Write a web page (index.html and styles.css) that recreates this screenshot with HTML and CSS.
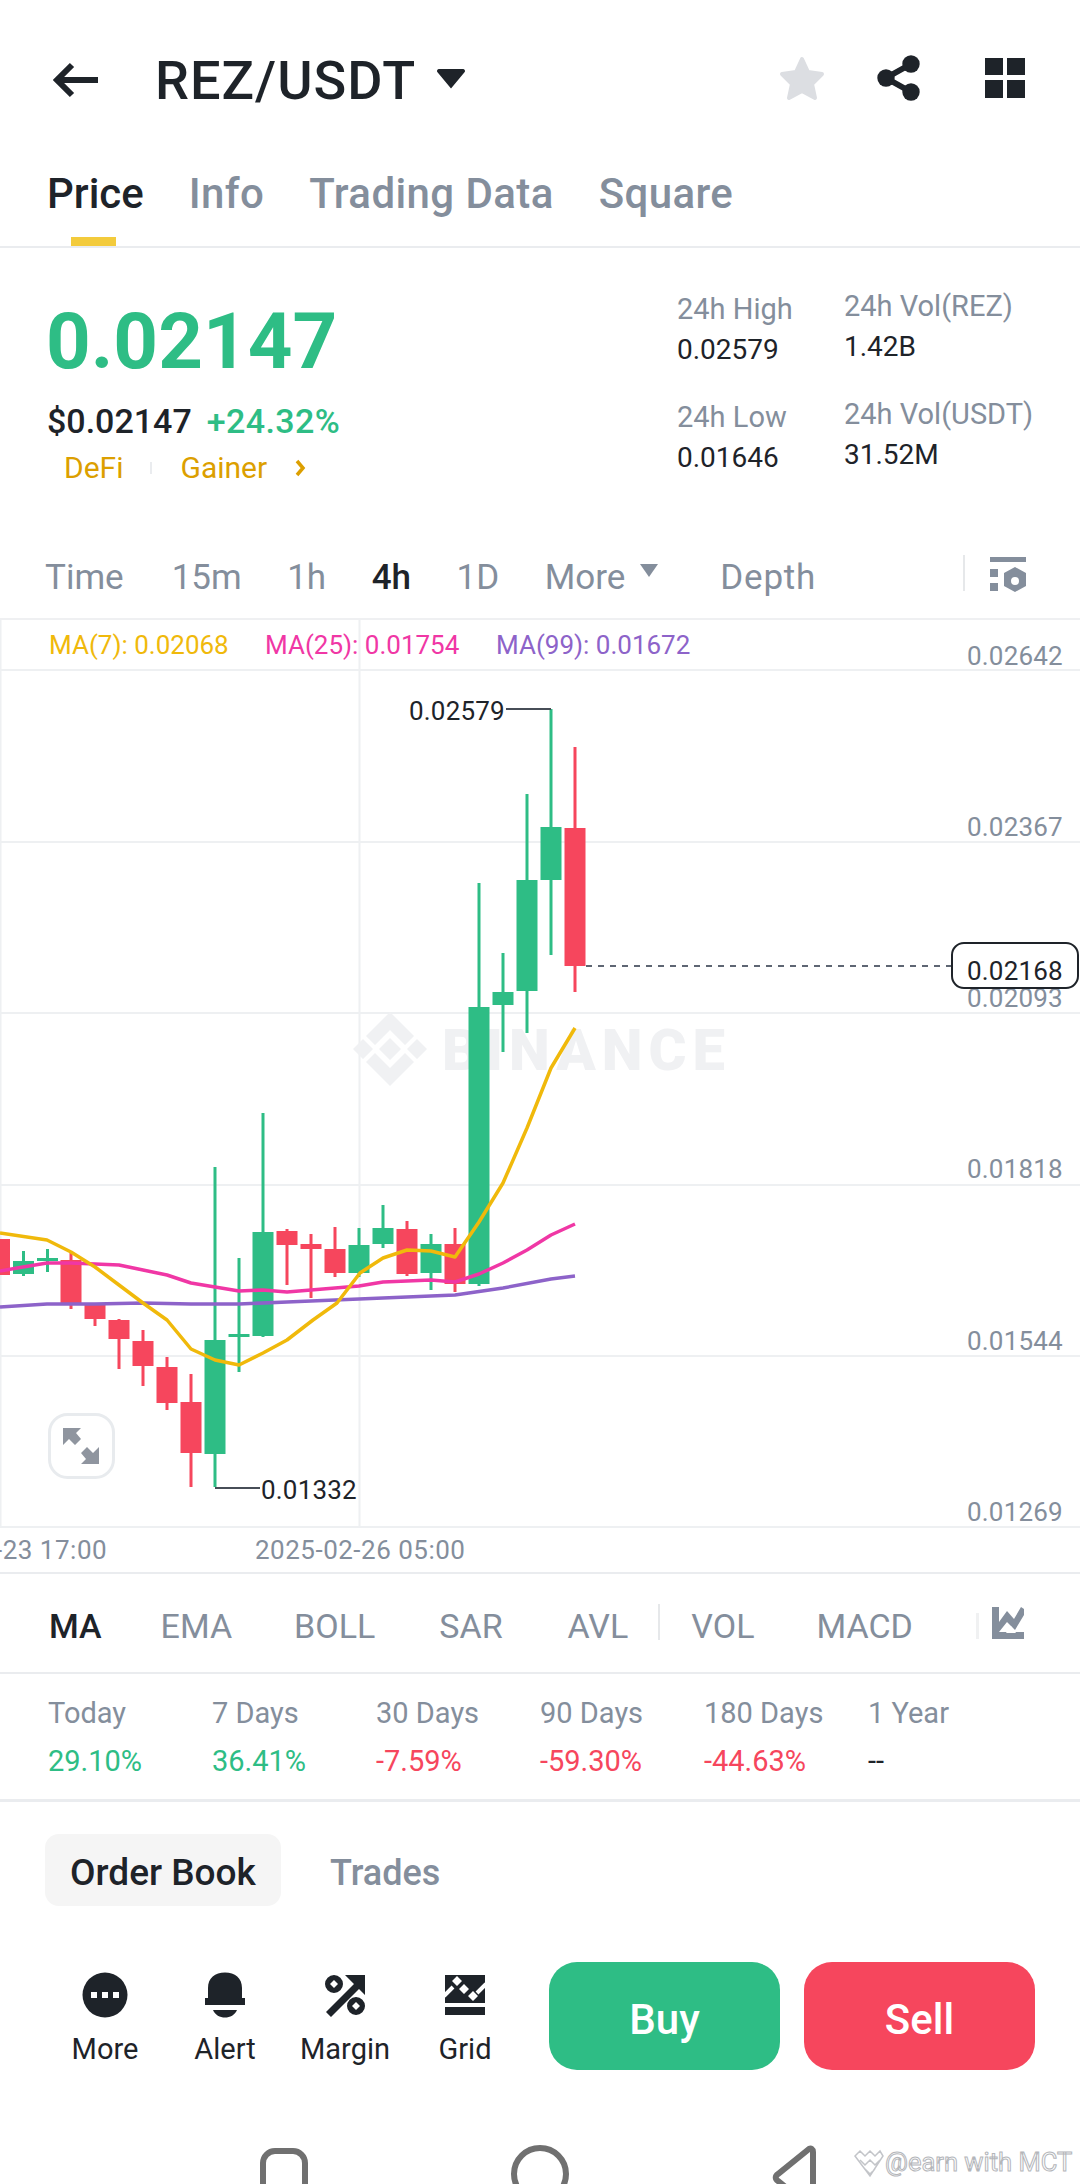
FILE: index.html
```html
<!DOCTYPE html>
<html lang="en">
<head>
<meta charset="utf-8">
<title>REZ/USDT</title>
<link rel="stylesheet" href="styles.css">
</head>
<body>
<div class="page">
  <header class="header">
    <svg class="back" viewBox="0 0 46 38" width="46" height="38"><path d="M46 19H6M20 4 5 19l15 15" fill="none" stroke="#1e2329" stroke-width="6"/></svg>
    <h1 class="title">REZ/USDT</h1>
    <svg class="caret" viewBox="0 0 28 21" width="28" height="21"><path d="M2 1h24a2 2 0 0 1 1.500 3.300L14 20.500.5 4.300A2 2 0 0 1 2 1z" fill="#1e2329"/></svg>
    <svg class="star" viewBox="0 0 46 46" width="46" height="46"><path d="m23 4 6 13 14 2-10 10 3 14-13-7-13 7 3-14L3 19l14-2z" fill="#dcdee2" stroke="#dcdee2" stroke-width="4" stroke-linejoin="round"/></svg>
    <svg class="share" viewBox="0 0 44 46" width="44" height="46"><path d="M34 9 9 23l25 14" fill="none" stroke="#1e2329" stroke-width="6"/><circle cx="34" cy="9" r="8.700" fill="#1e2329"/><circle cx="9" cy="23" r="8.700" fill="#1e2329"/><circle cx="34" cy="37" r="8.700" fill="#1e2329"/></svg>
    <svg class="apps" viewBox="0 0 40 40" width="40" height="40"><path d="M0 0h18v17H0zM22 0h18v17H22zM0 22h18v18H0zM22 22h18v18H22z" fill="#1e2329"/></svg>
  </header>

  <nav class="tabs">
    <span class="tab tab-on">Price</span>
    <span class="tab">Info</span>
    <span class="tab">Trading Data</span>
    <span class="tab">Square</span>
  </nav>

  <section class="summary">
    <div class="quote">
      <div class="last">0.02147</div>
      <div class="sub"><span class="usd">$0.02147</span><span class="chg">+24.32%</span></div>
      <div class="tags"><span>DeFi</span><i class="tag-sep"></i><span>Gainer</span><svg class="chev" viewBox="0 0 12 18" width="12" height="18"><path d="m3 2 6 7-6 7" fill="none" stroke="#dc9f00" stroke-width="3.500"/></svg></div>
    </div>
    <div class="stats">
      <div class="stat-col">
        <div class="stat-k">24h High</div><div class="stat-v">0.02579</div>
        <div class="stat-k stat-gap">24h Low</div><div class="stat-v">0.01646</div>
      </div>
      <div class="stat-col stat-col-b">
        <div class="stat-k">24h Vol(REZ)</div><div class="stat-v">1.42B</div>
        <div class="stat-k stat-gap">24h Vol(USDT)</div><div class="stat-v">31.52M</div>
      </div>
    </div>
  </section>

  <section class="ranges">
    <span class="r-first">Time</span><span>15m</span><span>1h</span><span class="on">4h</span><span>1D</span>
    <span class="more">More<svg viewBox="0 0 18 13" width="18" height="13"><path d="M0 0h18L9 13z" fill="#848e9c"/></svg></span>
    <span class="depth">Depth</span>
    <i class="range-sep"></i>
    <svg class="cfg" viewBox="0 0 36 36" width="36" height="36"><path d="M0 0h36v5H0zM0 12h8v8H0zM0 26h8v8H0z" fill="#848e9c"/><path fill-rule="evenodd" d="m25 10 11 6v13l-11 6-11-6V16zm0 10a4 4 0 1 0 0 8 4 4 0 0 0 0-8z" fill="#848e9c"/></svg>
  </section>

  <section class="chart">
    <svg class="plot" viewBox="0 620 1080 952" width="1080" height="952">
      <path class="grid" d="M0 670H1080M0 842H1080M0 1013H1080M0 1185H1080M0 1356H1080M0 1527H1080M359.500 620V1527M.5 620V1527"/>
      <g class="wm-mark">
        <path d="m390 1012 24 24-9 9-15-15-15 15-9-9zM390 1086l24-24-9-9-15 15-15-15-9 9zM390 1038l11 11-11 11-11-11zM363 1039l10 10-10 10-10-10zM417 1039l10 10-10 10-10-10z"/>
      </g>
      <text class="wm-text" x="442" y="1070">BINANCE</text>

      <path class="wick-g" d="M23.500 1251V1276M47.500 1249V1272M215 1167V1487M239 1258V1372M263 1113V1337M359 1228V1277M383 1205V1248M431 1234V1290M479 883V1286M503 953V1052M527 794V1033M551 709V955"/>
      <path class="body-g" d="M13 1261h21v13H13zM37 1258h21v3H37zM204.500 1340h21v114h-21zM228.500 1334h21v3h-21zM252.500 1232h21v104h-21zM348.500 1245h21v28h-21zM372.500 1228h21v16h-21zM420.500 1244h21v29h-21zM468.500 1007h21v277h-21zM492.500 992h21v13h-21zM516.500 880h21v111h-21zM540.500 827h21v53h-21z"/>
      <path class="wick-r" d="M71 1252V1309M95 1303V1326M119 1319V1369M143 1330V1386M167 1357V1410M191 1374V1487M287 1229V1285M311 1234V1298M335 1227V1277M407 1221V1276M455 1228V1292M575 747V992"/>
      <path class="body-r" d="M0 1239h10v36H0zM60.500 1260h21v43h-21zM84.500 1303h21v16h-21zM108.500 1320h21v19h-21zM132.500 1341h21v25h-21zM156.500 1367h21v36h-21zM180.500 1402h21v51h-21zM276.500 1231h21v14h-21zM300.500 1244h21v5h-21zM324.500 1249h21v24h-21zM396.500 1229h21v45h-21zM444.500 1244h21v40h-21zM564.500 828h21v138h-21z"/>

      <polyline class="ma99" points="0,1307 47,1304 95,1304 143,1303 191,1304 239,1304 287,1302 311,1301 359,1299 407,1297 455,1295 503,1288 551,1279 575,1276"/>
      <polyline class="ma25" points="0,1271 23,1267 47,1263 71,1263 95,1264 119,1265 143,1270 167,1275 191,1283 215,1287 239,1291 263,1290 287,1292 311,1290 335,1288 359,1286 383,1282 407,1281 431,1280 455,1282 479,1274 503,1263 527,1250 551,1235 575,1224"/>
      <polyline class="ma7" points="0,1233 47,1240 71,1252 95,1267 119,1285 143,1303 167,1320 191,1349 215,1360 239,1365 263,1353 287,1340 313,1320 337,1303 360,1273 383,1258 407,1250 431,1251 455,1257 479,1222 503,1183 527,1128 551,1068 575,1028"/>

      <path class="extreme" d="M506 709H551M215 1488H260"/>
      <path class="last-line" d="M586 966H952"/>

      <text class="axis" x="967" y="665">0.02642</text>
      <text class="axis" x="967" y="836">0.02367</text>
      <text class="axis" x="967" y="1007">0.02093</text>
      <rect class="last-fill" x="952" y="943" width="126" height="45" rx="12"/>
      <text class="dark-label" x="967" y="980">0.02168</text>
      <text class="axis" x="967" y="1178">0.01818</text>
      <text class="axis" x="967" y="1350">0.01544</text>
      <text class="axis" x="967" y="1521">0.01269</text>

      <text class="dark-label" x="409" y="720">0.02579</text>
      <text class="dark-label" x="261" y="1499">0.01332</text>
      <text class="axis axis-x" x="-5" y="1559">-23 17:00</text>
      <text class="axis axis-x" x="255" y="1559">2025-02-26 05:00</text>

      <text class="legend l7" x="49" y="654">MA(7): 0.02068</text>
      <text class="legend l25" x="265" y="654">MA(25): 0.01754</text>
      <text class="legend l99" x="496" y="654">MA(99): 0.01672</text>

      <rect class="expand" x="49.500" y="1414.500" width="64" height="63" rx="18"/>
      <path class="expand-ico" d="M63 1428h18l-5 5 5 6-6 6-6-6-6 6zM99 1464H81l5-5-5-6 6-6 6 6 6-6z"/>
    </svg>
  </section>

  <section class="indicators">
    <span class="on">MA</span><span>EMA</span><span>BOLL</span><span class="ind-sar">SAR</span><span class="ind-avl">AVL</span>
    <i class="ind-sep"></i>
    <span class="ind-vol">VOL</span><span>MACD</span>
    <i class="ind-fade"></i>
    <svg class="ind-ico" viewBox="0 0 32 32" width="32" height="32"><path d="M0 0h7v15L15 4l7 8L29 0l3 2v6l-9 15-8-8-8 10h25v7H0z" fill="#848e9c"/><path d="m19 19 5 7H14z" fill="#fff"/></svg>
  </section>

  <section class="periods">
    <div class="period"><span class="p-k">Today</span><span class="p-v up">29.10%</span></div>
    <div class="period"><span class="p-k">7 Days</span><span class="p-v up">36.41%</span></div>
    <div class="period"><span class="p-k">30 Days</span><span class="p-v down">-7.59%</span></div>
    <div class="period"><span class="p-k">90 Days</span><span class="p-v down">-59.30%</span></div>
    <div class="period"><span class="p-k">180 Days</span><span class="p-v down">-44.63%</span></div>
    <div class="period"><span class="p-k">1 Year</span><span class="p-v">--</span></div>
  </section>

  <section class="book">
    <span class="book-on">Order Book</span>
    <span class="book-off">Trades</span>
  </section>

  <section class="actions">
    <div class="tools">
      <div class="tool">
        <svg viewBox="0 0 46 46" width="46" height="46"><circle cx="23" cy="23" r="22.500" fill="#1e2329"/><path d="M9 20h6v6H9zM20 20h6v6h-6zM31 20h6v6h-6z" fill="#fff"/></svg>
        <span>More</span>
      </div>
      <div class="tool">
        <svg viewBox="0 0 46 46" width="46" height="46"><path d="M3 33h40v-7h-3V16C40 6 33 .5 23 .5S6 6 6 16v10H3zM11 38h24c-2 5-7 7.500-12 7.500S13 43 11 38z" fill="#1e2329"/></svg>
        <span>Alert</span>
      </div>
      <div class="tool">
        <svg viewBox="0 0 46 46" width="46" height="46"><path d="M23 3h20v20l-6-6L9 45l-5-5 28-28z" fill="#1e2329"/><path fill-rule="evenodd" d="M12 3a9 9 0 1 1 0 18 9 9 0 0 1 0-18zm0 5-4 4 4 4 4-4zM34 25a9 9 0 1 1 0 18 9 9 0 0 1 0-18zm0 5-4 4 4 4 4-4z" fill="#1e2329"/></svg>
        <span>Margin</span>
      </div>
      <div class="tool">
        <svg viewBox="0 0 46 46" width="46" height="46"><path d="M3 3h40v28H3zM3 35h40v8H3z" fill="#1e2329"/><path d="m15 4 5 5-5 5-5-5zM22 12l5 5-5 5-5-5zM31 19l5 5-5 5-5-5z" fill="#fff"/><path d="m2 24 9-9M35 21l9-9" fill="none" stroke="#fff" stroke-width="4"/></svg>
        <span>Grid</span>
      </div>
    </div>
    <button class="trade buy">Buy</button>
    <button class="trade sell">Sell</button>
  </section>

  <footer class="sysnav">
    <svg viewBox="0 2145 1080 39" width="1080" height="39">
      <rect class="nav-ico" x="263" y="2151" width="42" height="60" rx="12"/>
      <circle class="nav-ico" cx="540" cy="2174" r="26"/>
      <path class="nav-ico" d="M813 2152c0-3-2-4-4-3l-31 25c-3 2-3 5 0 7l31 25c2 1 4 0 4-3z"/>
      <path class="wm-small" d="m855 2156 5-5 5 5 5-5 5 5 5-5 3 5-13 20-15-20zM860 2160l5 5 5-5 5 5 5-5M865 2169l5 5 5-5"/>
    </svg>
    <span class="creator">@earn with MCT</span>
  </footer>
</div>
</body>
</html>
```

FILE: styles.css
```css
* { box-sizing: border-box; }
html, body { margin: 0; padding: 0; background: #fff; }
body { font-family: Roboto, "Noto Sans", sans-serif; color: #1e2329; }
.page { width: 1080px; height: 2184px; overflow: hidden; position: relative; }

.header { height: 160px; display: flex; align-items: center; padding-left: 52px; }
.back { flex: none; }
.title { margin: 2px 0 0 57px; font-size: 54px; font-weight: 500; line-height: 60px; letter-spacing: 1px; }
.caret { margin: -3px 0 0 21px; }
.star { margin: -4px 0 0 auto; }
.share { margin: -4px 0 0 52px; }
.apps { margin: -4px 55px 0 64px; }

.tabs { height: 88px; display: flex; gap: 45px; padding: 4px 0 0 47px; border-bottom: 2px solid #eaecef; }
.tab { position: relative; font-size: 42px; font-weight: 500; line-height: 60px; letter-spacing: .4px; color: #848e9c; }
.tab-on { color: #1e2329; letter-spacing: 0; }
.tab-on::after { content: ""; position: absolute; left: 24px; top: 73px; width: 45px; height: 9px; background: #f3cb3c; }

.summary { height: 288px; display: flex; justify-content: space-between; }
.quote { padding: 54px 0 0 47px; }
.last { margin-left: -1px; font-size: 78px; font-weight: 700; line-height: 80px; color: #2ebd85; }
.sub { display: flex; gap: 15px; margin-top: 19px; font-size: 34px; font-weight: 500; line-height: 40px; }
.chg { color: #2ebd85; letter-spacing: .4px; }
.tags { display: flex; align-items: center; margin-top: 9px; padding-left: 17px; font-size: 30px; line-height: 36px; color: #dc9f00; }
.tag-sep { width: 2px; height: 12px; margin: 0 28px 0 27px; background: #eaecef; }
.chev { margin-left: 27px; }
.stats { display: flex; padding-top: 41px; width: 403px; }
.stat-col { width: 167px; }
.stat-col-b { margin-top: -3px; }
.stat-k { font-size: 29px; line-height: 40px; color: #848e9c; white-space: nowrap; }
.stat-v { margin-top: 1px; font-size: 28px; line-height: 40px; white-space: nowrap; }
.stat-gap { margin-top: 27px; }

.ranges { height: 82px; display: flex; align-items: center; gap: 45.500px; padding-left: 45px; font-size: 35px; color: #848e9c; position: relative; }
.ranges .on { color: #1e2329; font-weight: 500; }
.r-first { margin-right: 2.500px; }
.more { display: flex; align-items: flex-start; gap: 15px; }
.more svg { margin-top: 7px; }
.depth { margin-left: 16.500px; letter-spacing: .8px; }
.range-sep { position: absolute; left: 963px; top: 19px; width: 2px; height: 36px; background: #e6e8ea; }
.cfg { position: absolute; left: 990px; top: 21px; }

.chart { height: 956px; border-top: 2px solid #eff0f2; border-bottom: 2px solid #eaecef; }
.plot { display: block; font-family: Roboto, sans-serif; }
.grid { stroke: #eef0f2; stroke-width: 2; fill: none; }
.wm-mark path { fill: #f0f1f3; }
.wm-text { font-size: 58px; font-weight: 900; letter-spacing: 6px; fill: #f0f1f3; }
.wick-g { stroke: #2ebd85; stroke-width: 3; fill: none; }
.wick-r { stroke: #f6465d; stroke-width: 3; fill: none; }
.body-g { fill: #2ebd85; }
.body-r { fill: #f6465d; }
.ma7, .ma25, .ma99 { fill: none; stroke-width: 3.500; stroke-linejoin: round; }
.ma7 { stroke: #f0b90b; }
.ma25 { stroke: #f037a5; }
.ma99 { stroke: #8d63c9; }
.extreme { stroke: #474d57; stroke-width: 2; fill: none; }
.last-line { stroke: #5e6673; stroke-width: 2; stroke-dasharray: 6 6; fill: none; }
.last-fill { fill: #fff; stroke: #1e2329; stroke-width: 2; }
.axis { font-size: 26px; letter-spacing: .2px; fill: #848e9c; }
.axis-x { letter-spacing: .5px; }
.dark-label { font-size: 26px; letter-spacing: .2px; fill: #1e2329; }
.legend { font-size: 26px; }
.l7 { fill: #f0b90b; }
.l25 { fill: #f037a5; }
.l99 { fill: #8d63c9; }
.expand { fill: #fff; stroke: #e8ebee; stroke-width: 3; }
.expand-ico { fill: #8f959f; }

.indicators { height: 98px; display: flex; align-items: center; gap: 62px; padding: 5px 0 0 49px; font-size: 34px; color: #848e9c; position: relative; }
.indicators .on { margin-right: -3px; color: #1e2329; font-weight: 500; }
.ind-sar { margin-left: 2px; }
.ind-avl { margin-left: 3px; }
.ind-vol { margin-left: 1px; }
.ind-sep { position: absolute; left: 658px; top: 30px; width: 2px; height: 36px; background: #e6e8ea; }
.ind-fade { position: absolute; left: 976px; top: 39px; width: 3px; height: 26px; background: #f0f1f2; }
.ind-ico { position: absolute; left: 992px; top: 33px; }

.periods { height: 130px; display: grid; grid-template-columns: repeat(6, 164px); padding: 19px 0 0 48px; border-top: 2px solid #eaecef; border-bottom: 3px solid #eaecef; }
.period { display: flex; flex-direction: column; gap: 8px; }
.p-k { font-size: 29px; line-height: 40px; color: #848e9c; }
.p-v { font-size: 29px; line-height: 40px; }
.up { color: #2ebd85; }
.down { color: #f6465d; }

.book { height: 104px; display: flex; align-items: flex-start; padding: 32px 0 0 45px; }
.book-on { width: 236px; height: 72px; line-height: 78px; text-align: center; border-radius: 14px; background: #f5f5f5; font-size: 37px; font-weight: 500; }
.book-off { margin-left: 49px; font-size: 36px; font-weight: 500; line-height: 78px; color: #848e9c; }

.actions { display: flex; align-items: flex-start; height: 164px; padding: 56px 0 0 45px; }
.tools { display: flex; width: 480px; }
.tool { width: 120px; display: flex; flex-direction: column; align-items: center; padding-top: 10px; font-size: 29px; line-height: 36px; gap: 13px; }
.trade { height: 108px; border: 0; border-radius: 28px; font: 500 42px Roboto, sans-serif; color: #fff; padding: 6px 0 0; }
.buy { width: 231px; margin-left: 24px; background: #2ebd85; }
.sell { width: 231px; margin-left: 24px; background: #f6465d; }

.sysnav { margin-top: 75px; height: 39px; position: relative; }
.sysnav svg { display: block; }
.nav-ico { fill: none; stroke: #707070; stroke-width: 6; }
.wm-small { fill: none; stroke: #c3c5c9; stroke-width: 1.500; }
.creator { position: absolute; left: 885px; top: 1px; font-size: 25.500px; line-height: 32px; color: #fff; -webkit-text-stroke: 1px #b4b6ba; white-space: nowrap; }
```
